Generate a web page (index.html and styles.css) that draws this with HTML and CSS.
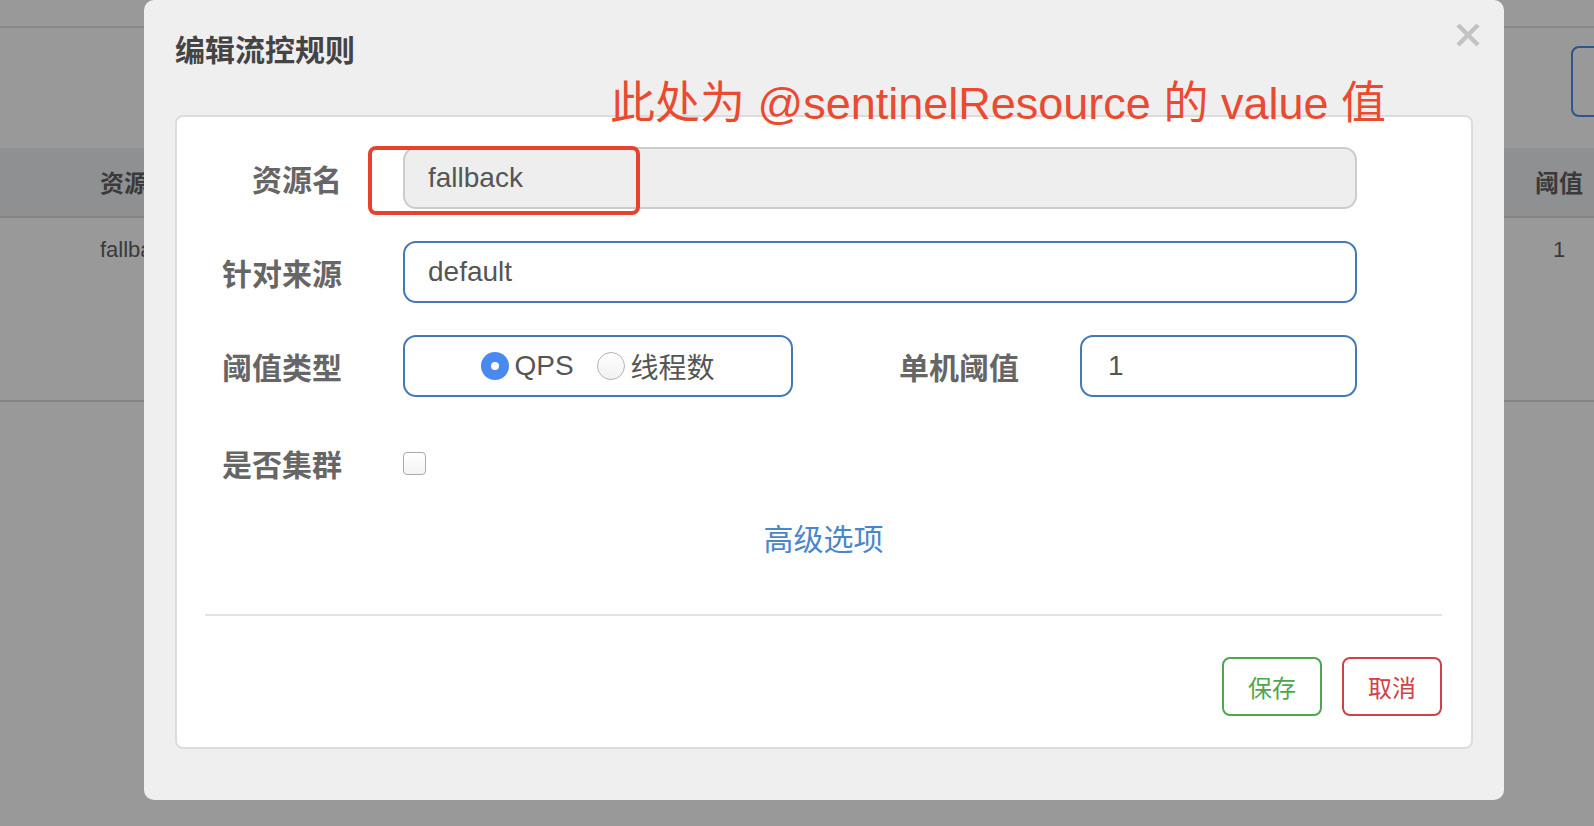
FILE: index.html
```html
<!DOCTYPE html>
<html lang="zh-CN">
<head>
    <meta charset="UTF-8">
    <title>编辑流控规则</title>
    <link rel="stylesheet" href="styles.css">
</head>
<body>
    <div class="page">
        <div class="topbar"></div>
        <div class="toolbar"><span class="tool-btn"></span></div>
        <div class="table-head">
            <span>资源名</span>
            <span>阈值</span>
        </div>
        <div class="table-row">
            <span>fallback</span>
            <span class="num">1</span>
        </div>
    </div>

    <div class="modal">
        <div class="modal-header">
            <h3>编辑流控规则</h3>
            <span class="close">
                <svg width="26" height="26" viewBox="0 0 26 26">
                    <path d="M3 3 L23 23 M23 3 L3 23" stroke="#c3c3c3" stroke-width="4.5" fill="none"/>
                </svg>
            </span>
        </div>

        <div class="panel">
            <div class="form-row">
                <label>资源名</label>
                <input class="field field-disabled" value="fallback" disabled>
            </div>
            <div class="form-row">
                <label>针对来源</label>
                <input class="field" value="default">
            </div>
            <div class="form-row form-row-type">
                <label>阈值类型</label>
                <div class="radio-group">
                    <span class="radio checked"></span><span class="radio-text">QPS</span>
                    <span class="radio"></span><span class="radio-text cjk">线程数</span>
                </div>
                <label class="label-wide">单机阈值</label>
                <input class="field field-small" value="1">
            </div>
            <div class="form-row">
                <label>是否集群</label>
                <span class="checkbox"></span>
            </div>
            <div class="advanced">高级选项</div>
            <div class="divider"></div>
            <div class="footer">
                <button class="btn btn-save">保存</button>
                <button class="btn btn-cancel">取消</button>
            </div>
        </div>

        <!-- annotation drawn over the dialog -->
        <div class="note">此处为 @sentinelResource 的 value 值</div>
        <div class="note-box"></div>
    </div>
</body>
</html>
```

FILE: styles.css
```css
body {
    margin: 0;
    background-color: #999;
    font-family: "Liberation Sans", "Noto Sans CJK SC", sans-serif;
    overflow: hidden;
}
.page {
    width: 1594px;
    height: 826px;
}
.topbar {
    height: 26px;
    border-bottom: 2px solid #878787;
}
.toolbar {
    height: 120px;
    display: flex;
    justify-content: flex-end;
    align-items: flex-start;
}
.tool-btn {
    width: 40px;
    height: 67px;
    margin-top: 18px;
    margin-right: -21px;
    border: 2px solid #2f5686;
    border-radius: 8px;
}
.table-head,
.table-row {
    display: grid;
    grid-template-columns: 1fr 59px;
    padding-left: 100px;
    color: #3a3a3a;
}
.table-head {
    height: 68px;
    line-height: 68px;
    background-color: #8f9092;
    border-bottom: 2px solid #858585;
    font-family: "Noto Sans CJK SC", sans-serif;
    font-weight: 700;
    font-size: 24px;
}
.table-row {
    height: 164px;
    padding-top: 18px;
    line-height: 28px;
    font-size: 22px;
    border-bottom: 2px solid #858585;
}
.table-row .num {
    padding-left: 18px;
}

.modal {
    position: absolute;
    left: 144px;
    top: 0;
    width: 1360px;
    height: 800px;
    box-sizing: border-box;
    padding: 28px 31px 0 31px;
    background-color: #efefef;
    border-radius: 10px;
}
.modal-header {
    display: flex;
    justify-content: space-between;
    align-items: flex-start;
    height: 40px;
    margin-bottom: 47px;
}
.modal-header h3 {
    margin: 0;
    font-family: "Noto Sans CJK SC", sans-serif;
    font-size: 30px;
    line-height: 40px;
    font-weight: 700;
    color: #444;
}
.close {
    margin-top: -6px;
    margin-right: -8px;
    height: 26px;
}
.panel {
    background-color: #fff;
    border: 2px solid #dcdcdc;
    border-radius: 8px;
    padding: 30px 29px 31px 28px;
}
.form-row {
    display: flex;
    align-items: center;
    height: 62px;
    margin-bottom: 32px;
    padding-right: 85px;
}
.form-row-type {
    margin-bottom: 35px;
}
.form-row label {
    width: 137px;
    flex-shrink: 0;
    margin-right: 61px;
    text-align: right;
    font-family: "Noto Sans CJK SC", sans-serif;
    font-weight: 700;
    font-size: 30px;
    color: #666;
}
.form-row .label-wide {
    width: auto;
    flex: 1;
}
.field {
    flex: 1;
    height: 62px;
    box-sizing: border-box;
    border: 2px solid #4478b8;
    border-radius: 13px;
    padding: 0 0 0 23px;
    font-family: "Liberation Sans", sans-serif;
    font-size: 28px;
    color: #555;
    background-color: #fff;
    outline: none;
}
.field-disabled {
    background-color: #eee;
    border-color: #ccc;
    color: #555;
    -webkit-text-fill-color: #555;
    opacity: 1;
}
.field-small {
    flex: none;
    width: 277px;
    padding-left: 26px;
}
.radio-group {
    width: 390px;
    height: 62px;
    box-sizing: border-box;
    border: 2px solid #4478b8;
    border-radius: 13px;
    display: flex;
    align-items: center;
    justify-content: center;
}
.radio {
    width: 28px;
    height: 28px;
    box-sizing: border-box;
    border-radius: 50%;
    border: 1px solid #b4b4b4;
    background: linear-gradient(#fff, #f1f1f1);
    margin-right: 6px;
    position: relative;
}
.radio.checked {
    border: none;
    background: #4a8af0;
    margin-right: 5px;
}
.radio.checked::after {
    content: "";
    position: absolute;
    left: 10px;
    top: 10px;
    width: 8px;
    height: 8px;
    border-radius: 50%;
    background: #fff;
}
.radio-text {
    font-size: 28px;
    color: #555;
    margin-right: 23px;
}
.radio-text.cjk {
    font-family: "Noto Sans CJK SC", sans-serif;
    margin-right: 0;
}
.checkbox {
    width: 23px;
    height: 23px;
    box-sizing: border-box;
    border: 1px solid #aaa;
    border-radius: 4px;
    background: linear-gradient(#fff, #f4f4f4);
}
.advanced {
    margin-top: -9px;
    text-align: center;
    font-family: "Noto Sans CJK SC", sans-serif;
    font-size: 30px;
    line-height: 40px;
    color: #4a87c8;
}
.divider {
    height: 2px;
    background-color: #e4e4e4;
    margin: 57px 0 41px;
}
.footer {
    display: flex;
    justify-content: flex-end;
    gap: 20px;
}
.btn {
    width: 100px;
    height: 59px;
    background: #fff;
    border: 2px solid;
    border-radius: 8px;
    font-family: "Noto Sans CJK SC", sans-serif;
    font-size: 24px;
}
.btn-save {
    border-color: #4ea64e;
    color: #4ea64e;
}
.btn-cancel {
    border-color: #cf4247;
    color: #cf4247;
}

.note {
    position: absolute;
    left: 466px;
    top: 80px;
    font-family: "Liberation Sans", "Noto Sans CJK SC", sans-serif;
    font-size: 45px;
    line-height: 48px;
    color: #ea4a2f;
    white-space: nowrap;
}
.note-box {
    position: absolute;
    left: 224px;
    top: 146px;
    width: 272px;
    height: 69px;
    box-sizing: border-box;
    border: 4px solid #e8412c;
    border-radius: 8px;
}
```
